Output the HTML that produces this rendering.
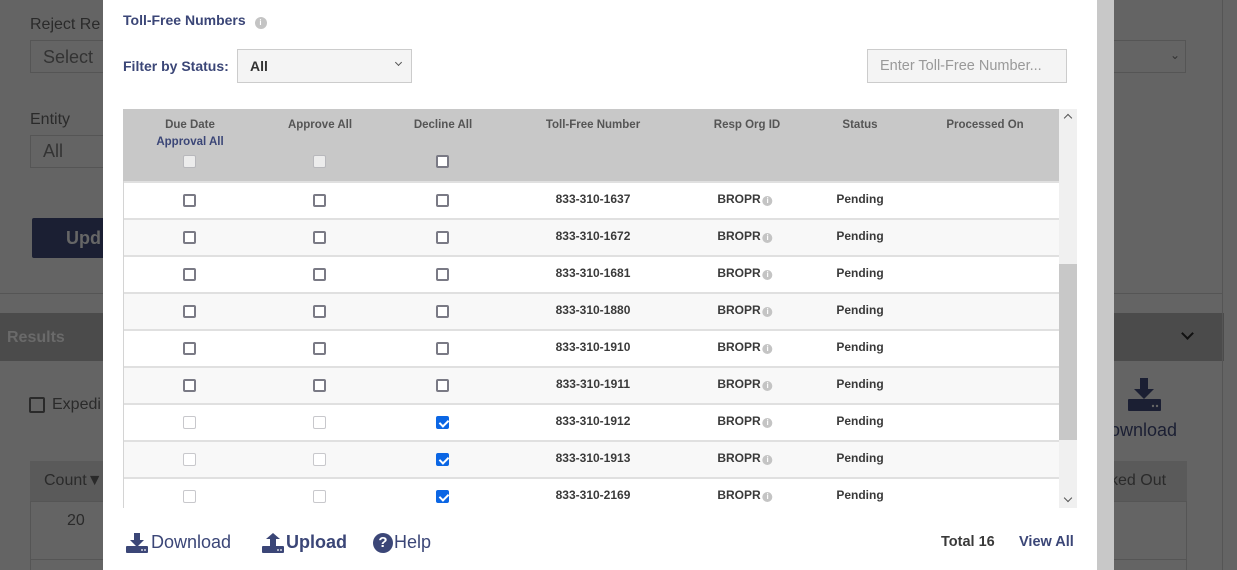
<!DOCTYPE html>
<html><head><meta charset="utf-8"><style>
*{box-sizing:border-box;margin:0;padding:0}
body{width:1237px;height:570px;overflow:hidden;background:#646464;font-family:"Liberation Sans",sans-serif;position:relative}
.a{position:absolute}
.bg{color:#2a2a2a}
.cb{position:absolute;width:13px;height:13px;border:2px solid #7a7a85;border-radius:2px;background:#fff}
.cb.d{border-color:#c8c8cc;border-width:1.5px}
.cb.h{background:#ececec;border-color:#b8b8bc;border-width:1.5px}
.cb.c{background:#0b66e4;border-color:#0b66e4}
.cb.c:after{content:"";position:absolute;left:2.5px;top:0px;width:4px;height:7px;border:solid #fff;border-width:0 2px 2px 0;transform:rotate(45deg)}
.t{position:absolute;font-size:12px;font-weight:bold;color:#3a3a3a;transform:translateX(-50%);white-space:nowrap}
.th{position:absolute;font-size:11.5px;font-weight:bold;color:#555;transform:translateX(-50%);white-space:nowrap;text-align:center;line-height:17px}
.i{display:inline-block;width:10px;height:10px;border-radius:50%;background:#c4c4c4;color:#fff;font-size:8px;text-align:center;line-height:10px;vertical-align:0;margin-left:2px}
.nav{color:#3b4677;font-weight:bold}
</style></head><body>
<div class="a bg" style="left:30px;top:16px;font-size:16px">Reject Re</div>
<div class="a" style="left:30px;top:40px;width:120px;height:33px;border:1px solid #555;font-size:18px;color:#333;padding:6px 12px">Select</div>
<div class="a" style="left:1100px;top:40px;width:86px;height:33px;border:1px solid #555"></div>
<div class="a" style="left:1170px;top:48px;color:#333;font-size:12px">&#8964;</div>
<div class="a bg" style="left:30px;top:111px;font-size:16px">Entity</div>
<div class="a" style="left:30px;top:135px;width:120px;height:33px;border:1px solid #555;font-size:18px;color:#333;padding:5px 12px">All</div>
<div class="a" style="left:32px;top:218px;width:100px;height:40px;background:#1b1f33;border-radius:2px;color:#666;font-size:18px;font-weight:bold;padding:10px 34px">Upd</div>
<div class="a" style="left:0;top:293px;width:1222px;height:1px;background:#555"></div>
<div class="a" style="left:0;top:313px;width:1224px;height:48px;background:#4b4b4b"></div>
<div class="a" style="left:7px;top:329px;font-size:16px;font-weight:bold;color:#6a6a6a">Results</div>
<div class="a" style="left:1183px;top:329px;width:9px;height:9px;border:solid #111;border-width:0 2.5px 2.5px 0;transform:rotate(45deg)"></div>
<div class="a" style="left:1222px;top:0;width:1px;height:570px;background:#555"></div>
<div class="a" style="left:29px;top:397px;width:16px;height:16px;border:2px solid #2a2a2a;border-radius:2px"></div>
<div class="a bg" style="left:52px;top:396px;font-size:16px">Expedi</div>
<svg class="a" style="left:1127px;top:378px" width="34" height="34" viewBox="0 0 34 34"><path d="M13 0h8v11h6l-10 10-10-10h6z" fill="#1b1f33"/><rect x="1" y="21" width="33" height="12" rx="1" fill="#1b1f33"/><circle cx="26" cy="28" r="1.2" fill="#666"/><circle cx="30" cy="28" r="1.2" fill="#666"/></svg>
<div class="a" style="left:1110px;top:420px;font-size:18px;color:#1b1f33">ownload</div>
<div class="a" style="left:30px;top:461px;width:1157px;height:40px;background:#5a5a5a"></div>
<div class="a bg" style="left:44px;top:472px;font-size:16px">Count&#9660;</div>
<div class="a bg" style="left:1110px;top:472px;font-size:16px">ked Out</div>
<div class="a" style="left:30px;top:501px;width:1157px;height:1px;background:#555"></div>
<div class="a" style="left:30px;top:501px;width:1px;height:69px;background:#555"></div>
<div class="a" style="left:1186px;top:501px;width:1px;height:69px;background:#555"></div>
<div class="a" style="left:30px;top:559px;width:1157px;height:1px;background:#555"></div>
<div class="a bg" style="left:67px;top:512px;font-size:16px">20</div>
<div class="a" style="left:103px;top:0;width:994px;height:570px;background:#fff"></div>
<div class="a" style="left:1097px;top:0;width:17px;height:570px;background:#c8c8c8"></div>
<div class="a nav" style="left:123px;top:12px;font-size:14px">Toll-Free Numbers <span class="i" style="width:12px;height:12px;line-height:12px;margin-left:5px">i</span></div>
<div class="a nav" style="left:123px;top:58px;font-size:14px">Filter by Status:</div>
<div class="a" style="left:237px;top:49px;width:175px;height:34px;background:#f4f4f4;border:1px solid #ccc;font-size:14px;font-weight:bold;color:#333;padding:8px 12px">All</div>
<div class="a" style="left:396px;top:60px;width:5px;height:5px;border:solid #555;border-width:0 1.2px 1.2px 0;transform:rotate(45deg)"></div>
<div class="a" style="left:867px;top:49px;width:200px;height:34px;background:#f4f4f4;border:1px solid #ccc;font-size:14.5px;color:#999;padding:8px 12px">Enter Toll-Free Number...</div>
<div class="a" style="left:123px;top:109px;width:936px;height:72px;background:#c8c8c8"></div>
<div class="a" style="left:1059px;top:109px;width:18px;height:399px;background:#f0f0f0"></div>
<div class="a" style="left:1059px;top:264px;width:18px;height:176px;background:#c8c8c8"></div>
<div class="a" style="left:1065px;top:115px;width:6px;height:6px;border:solid #555;border-width:1.5px 0 0 1.5px;transform:rotate(45deg)"></div>
<div class="a" style="left:1065px;top:495px;width:6px;height:6px;border:solid #555;border-width:0 1.5px 1.5px 0;transform:rotate(45deg)"></div>
<div class="th" style="left:190px;top:117px">Due Date<br><span style="color:#3b4677">Approval All</span></div>
<div class="th" style="left:320px;top:117px">Approve All</div>
<div class="th" style="left:443px;top:117px">Decline All</div>
<div class="th" style="left:593px;top:117px">Toll-Free Number</div>
<div class="th" style="left:747px;top:117px">Resp Org ID</div>
<div class="th" style="left:860px;top:117px">Status</div>
<div class="th" style="left:985px;top:117px">Processed On</div>
<div class="cb h" style="left:183px;top:155px"></div>
<div class="cb h" style="left:313px;top:155px"></div>
<div class="cb" style="left:436px;top:155px"></div>
<div class="a" style="left:123px;top:181px;width:1px;height:327px;background:#d4d4d4"></div>
<div id="rows"></div>
<svg class="a" style="left:126px;top:533px" width="22" height="20" viewBox="0 0 22 20"><path d="M8 0h6v7h4l-7 7-7-7h4z" fill="#3b4677"/><rect x="0" y="13" width="22" height="7" rx="1" fill="#3b4677"/><circle cx="16" cy="17" r="0.9" fill="#fff"/><circle cx="19" cy="17" r="0.9" fill="#fff"/></svg>
<div class="a" style="left:151px;top:532px;font-size:18px;color:#3b4677">Download</div>
<svg class="a" style="left:262px;top:533px" width="22" height="20" viewBox="0 0 22 20"><path d="M8 13V6H4l7-6 7 6h-4v7z" fill="#3b4677"/><rect x="0" y="13" width="22" height="7" rx="1" fill="#3b4677"/><circle cx="16" cy="17" r="0.9" fill="#fff"/><circle cx="19" cy="17" r="0.9" fill="#fff"/></svg>
<div class="a nav" style="left:286px;top:532px;font-size:18px">Upload</div>
<div class="a" style="left:373px;top:533px;width:20px;height:20px;border-radius:50%;background:#3b4677;color:#fff;font-weight:bold;font-size:15px;text-align:center;line-height:20px">?</div>
<div class="a" style="left:394px;top:532px;font-size:18px;color:#3b4677">Help</div>
<div class="a" style="left:941px;top:534px;font-size:14.5px;font-weight:bold;color:#3a3a3a">Total 16</div>
<div class="a nav" style="left:1019px;top:534px;font-size:14.5px">View All</div>
<script>
var n=["1637","1672","1681","1880","1910","1911","1912","1913","2169"],h="";
for(var k=0;k<9;k++){var y=181+k*37,ch=k>=6;
h+='<div class="a" style="left:124px;top:'+y+'px;width:935px;height:'+(k==8?31:37)+'px;background:'+(k%2?'#f8f8f8':'#fff')+';border-top:2px solid #e0e0e0"></div>';
var cy=y+13;
h+='<div class="cb'+(ch?' d':'')+'" style="left:183px;top:'+cy+'px"></div>';
h+='<div class="cb'+(ch?' d':'')+'" style="left:313px;top:'+cy+'px"></div>';
h+='<div class="cb'+(ch?' c':'')+'" style="left:436px;top:'+cy+'px"></div>';
h+='<div class="t" style="left:593px;top:'+(y+11)+'px">833-310-'+n[k]+'</div>';
h+='<div class="t" style="left:745px;top:'+(y+11)+'px">BROPR<span class="i">i</span></div>';
h+='<div class="t" style="left:860px;top:'+(y+11)+'px">Pending</div>';}
document.getElementById("rows").outerHTML=h;
</script>
</body></html>
